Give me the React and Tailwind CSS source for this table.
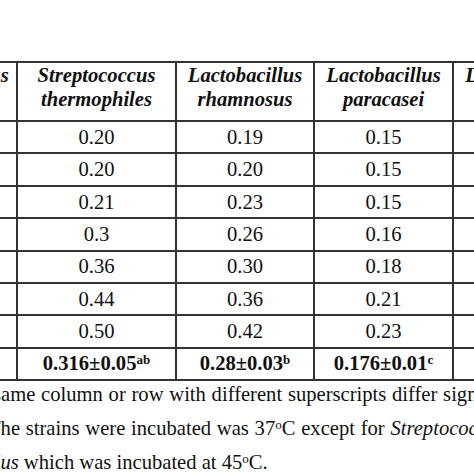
export default function App() {
  const border = "border-r-2 border-b-2 border-[#333]";
  const cell = `${border} flex items-center justify-center`;
  const head = `${border} flex flex-col items-center justify-start text-center font-bold italic leading-[24px]`;
  const headers = [
    ["Lactobacillus", "plantarum"],
    ["Streptococcus", "thermophiles"],
    ["Lactobacillus", "rhamnosus"],
    ["Lactobacillus", "paracasei"],
    ["Lactobacillus", "casei"],
  ];
  const rows = [
    ["0.18", "0.20", "0.19", "0.15", "0.17"],
    ["0.19", "0.20", "0.20", "0.15", "0.18"],
    ["0.20", "0.21", "0.23", "0.15", "0.19"],
    ["0.22", "0.3", "0.26", "0.16", "0.20"],
    ["0.25", "0.36", "0.30", "0.18", "0.22"],
    ["0.28", "0.44", "0.36", "0.21", "0.24"],
    ["0.31", "0.50", "0.42", "0.23", "0.26"],
  ];
  const means = [
    ["0.233±0.02", "b"],
    ["0.316±0.05", "ab"],
    ["0.28±0.03", "b"],
    ["0.176±0.01", "c"],
    ["0.20±0.02", "b"],
  ];
  return (
    <div
      className="w-[474px] h-[474px] overflow-hidden bg-white text-[#111] text-[20.6px]"
      style={{ fontFamily: '"Liberation Serif", "Times New Roman", serif' }}
    >
      <div className="ml-[-121px] w-[720px] pt-[61px]">
        <div className="grid grid-cols-[139px_159px_138px_139px_139px] grid-rows-[59px_repeat(8,32.375px)] border-t-2 border-[#333]">
          {headers.map((h, i) => (
            <div key={"h" + i} className={i === 0 ? `${head} pl-[8px]` : head}>
              <span>{h[0]}</span>
              <span>{h[1]}</span>
            </div>
          ))}
          {rows.map((r, ri) =>
            r.map((v, ci) => (
              <div key={ri + "-" + ci} className={cell}>
                {v}
              </div>
            ))
          )}
          {means.map((m, i) => (
            <div key={"m" + i} className={`${cell} font-bold`}>
              <span>
                {m[0]}
                <sup className="text-[13px]">{m[1]}</sup>
              </span>
            </div>
          ))}
        </div>
        <div className="-mt-[4px] leading-[34px] whitespace-nowrap">
          <div className="ml-[114px] [word-spacing:0.6px]">
            same column or row with different superscripts differ significantly
          </div>
          <div className="ml-[109px] [word-spacing:0.6px]">
            The strains were incubated was 37<sup className="text-[13px]">o</sup>C except for{" "}
            <i>Streptococcus thermophilus</i>
          </div>
          <div className="ml-[31px]">
            <i>thermophilus</i> which was incubated at 45<sup className="text-[13px]">o</sup>C.
          </div>
        </div>
      </div>
    </div>
  );
}
